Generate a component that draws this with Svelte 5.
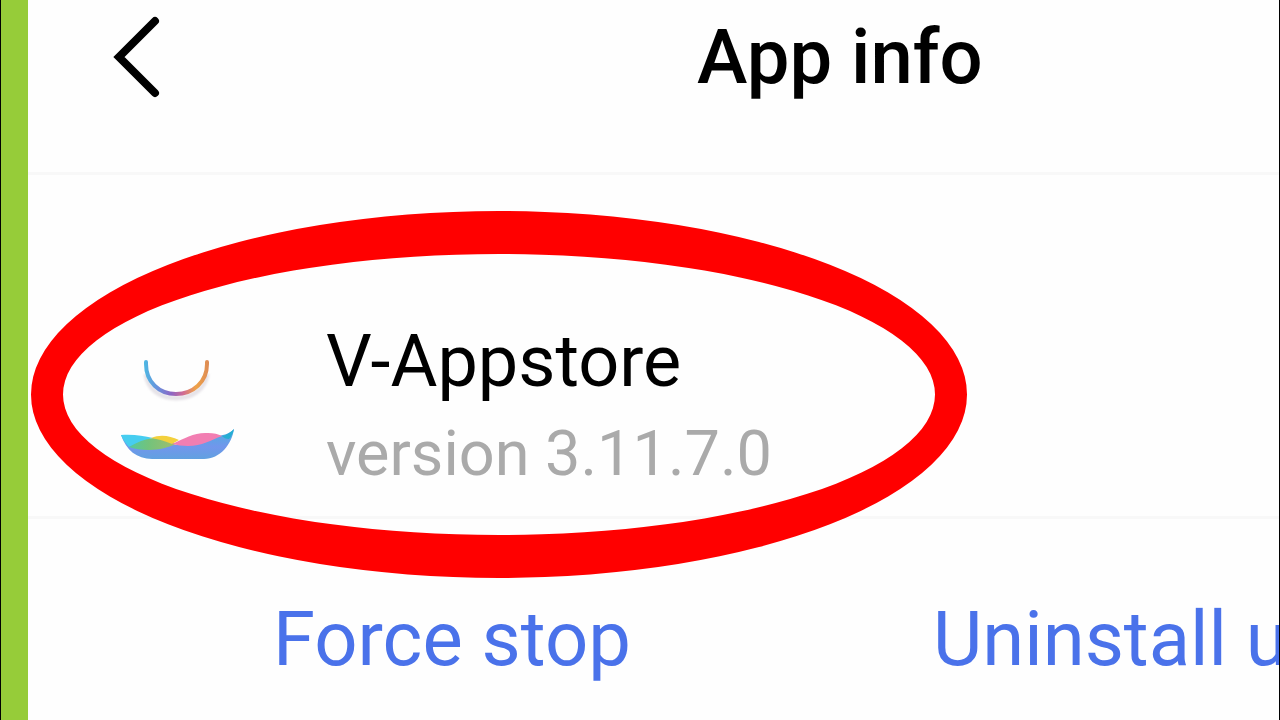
<script lang="ts">
  interface Props {
    name?: string;
    version?: string;
    actions?: string[];
  }

  let {
    name = "V-Appstore",
    version = "3.11.7.0",
    actions = ["Force stop", "Uninstall u"],
  }: Props = $props();
</script>

<main class="screen">
  <header class="topbar">
    <button type="button" class="back" aria-label="Back">
      <svg width="48" height="84" viewBox="0 0 48 84" aria-hidden="true">
        <path d="M42 6 6 42l36 36" />
      </svg>
    </button>
    <h1>App info</h1>
  </header>

  <section class="app">
    <svg class="logo" width="120" height="112" viewBox="18 10 120 112" aria-hidden="true">
      <defs>
        <linearGradient id="handle" x1="44" y1="0" x2="109" y2="0" gradientUnits="userSpaceOnUse">
          <stop offset="0" stop-color="#4db9e3" />
          <stop offset="0.22" stop-color="#6b8edb" />
          <stop offset="0.42" stop-color="#8c65c4" />
          <stop offset="0.6" stop-color="#d06a94" />
          <stop offset="0.8" stop-color="#efa348" />
          <stop offset="1" stop-color="#dd8b56" />
        </linearGradient>
        <linearGradient id="water" x1="0" y1="94" x2="0" y2="120" gradientUnits="userSpaceOnUse">
          <stop offset="0" stop-color="#55a9e3" />
          <stop offset="0.5" stop-color="#7296ec" />
          <stop offset="1" stop-color="#5fa2df" />
        </linearGradient>
        <linearGradient id="leaf" x1="21" y1="0" x2="75" y2="0" gradientUnits="userSpaceOnUse">
          <stop offset="0" stop-color="#45cbb0" />
          <stop offset="0.5" stop-color="#72c37c" />
          <stop offset="1" stop-color="#9fbd6d" />
        </linearGradient>
        <filter id="soft" x="-20%" y="-20%" width="140%" height="140%">
          <feGaussianBlur stdDeviation="1" />
        </filter>
      </defs>
      <path class="shade" d="M46 34c2 16 15 24 30 24s29-8 31-24" filter="url(#soft)" />
      <path class="handle" d="M46 22v2c0 18 13 30 30 30s31-12 31-30v-2" />
      <path
        fill="url(#water)"
        d="M21 95c9 0 17 3 25 4 10 2 20 6 30 6 17 0 30-6 42-9 7-1 12-3 16-7-2 15-14 30-30 30H52C37 119 26 110 21 95Z"
      />
      <path fill="#46cdf0" d="M21 95c13-1 22 1 32 3-9 2-16 5-24 9-3-3-6-7-8-12Z" />
      <path fill="url(#leaf)" d="M29 107c8-5 16-8 24-9 9 0 17 3 24 6-9 3-17 6-28 6-8 0-15-1-20-3Z" />
      <path fill="#f3d03c" d="M51 98c10-4 19-2 28 2l-7 4c-7-3-14-5-21-6Z" />
      <path fill="#f27eb2" d="M72 104c13-6 23-12 36-11 6 0 10 1 14 3-11 4-20 10-34 10-6 0-11-1-16-2Z" />
      <path fill="#25aed3" d="M122 96c5-1 9-4 12-7-1 4-3 8-5 10-3 0-5-1-7-3Z" />
    </svg>
    <div class="details">
      <h2>{name}</h2>
      <p>version {version}</p>
    </div>
    <div class="ring"></div>
  </section>

  <nav class="actions" aria-label="App actions">
    {#each actions as action}
      <button type="button">{action}</button>
    {/each}
  </nav>
</main>

<style>
  :global(body) {
    margin: 0;
    background: #fefefe;
  }

  .screen {
    box-sizing: border-box;
    min-height: 100vh;
    border-left: 1px solid #000;
    border-right: 1px solid #000;
    background: linear-gradient(to right, #96cc39 27px, #fefefe 27px);
    padding-left: 27px;
    overflow: hidden;
    font-family: Roboto, "Liberation Sans", sans-serif;
    color: #000;
  }

  h1,
  h2,
  p {
    margin: 0;
    white-space: nowrap;
  }

  button {
    padding: 0;
    border: none;
    background: transparent;
    color: inherit;
    font: inherit;
    cursor: pointer;
  }

  .topbar {
    display: flex;
    align-items: center;
    gap: 536px;
    padding: 13px 0 71px 85px;
    border-bottom: 3px solid #f8f8f8;
  }

  .back {
    display: flex;
  }

  .back svg {
    height: 88px;
    fill: none;
    stroke: #000;
    stroke-width: 8;
    stroke-linecap: round;
  }

  h1 {
    font-size: 76px;
    line-height: 88px;
    font-weight: 500;
  }

  .app {
    position: relative;
    display: flex;
    align-items: center;
    gap: 88px;
    padding: 141px 0 20px 90px;
    border-bottom: 3px solid #f8f8f8;
  }

  .logo {
    flex-shrink: 0;
  }

  .shade {
    fill: none;
    stroke: #e6e3e8;
    stroke-width: 5;
  }

  .handle {
    fill: none;
    stroke: url(#handle);
    stroke-width: 4;
    stroke-linecap: round;
  }

  h2 {
    font-size: 72px;
    line-height: 92px;
    font-weight: 400;
  }

  p {
    font-size: 63px;
    line-height: 88px;
    padding-top: 2px;
    margin-bottom: -2px;
    color: #aaa;
  }

  /* hand-marked highlight, thicker on top and bottom than on the sides */
  .ring {
    position: absolute;
    top: 36px;
    left: 3px;
    box-sizing: border-box;
    width: 936px;
    height: 367px;
    border: solid #f00;
    border-width: 43px 32px;
    border-radius: 50%;
    pointer-events: none;
  }

  .actions {
    display: flex;
    gap: 302px;
    padding: 76px 0 32px 245px;
    color: #4a72ea;
    font-size: 76px;
    line-height: 88px;
  }

  .actions button {
    flex-shrink: 0;
    white-space: nowrap;
  }
</style>
